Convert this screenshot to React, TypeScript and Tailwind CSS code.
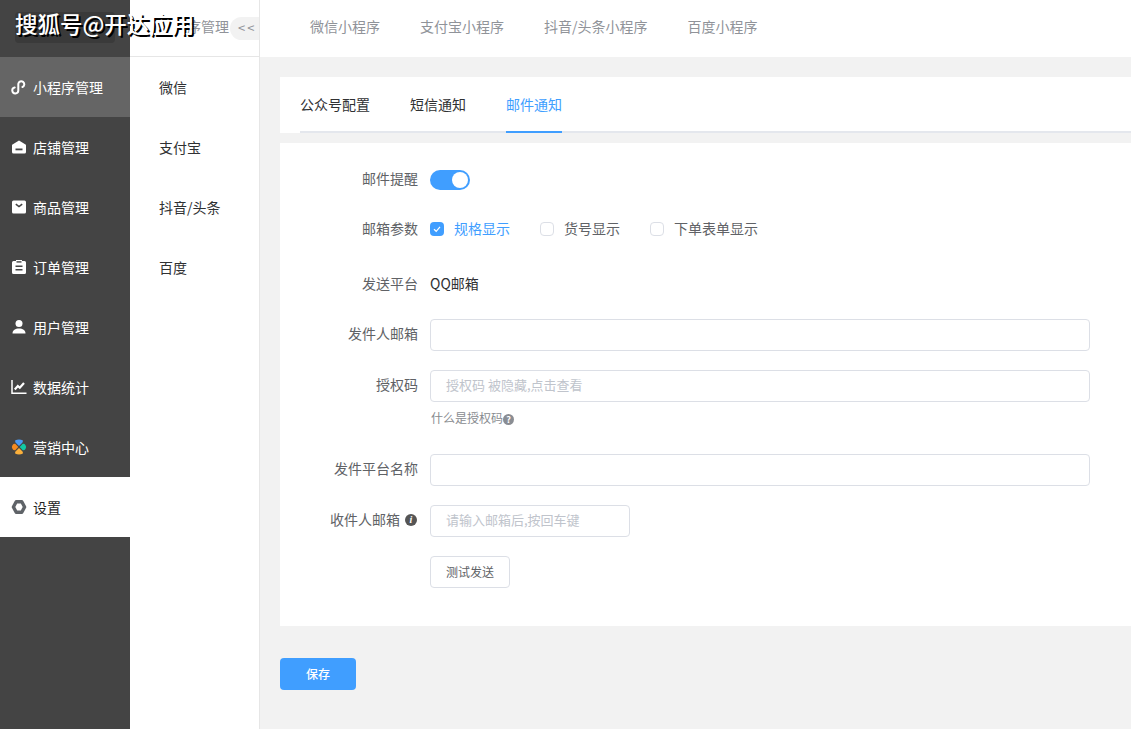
import React from "react";

const font = { fontFamily: '"Noto Sans CJK SC", "Liberation Sans", sans-serif' };

const Mini = () => (
  <svg width="16" height="16" viewBox="0 0 16 16" fill="none" stroke="white" strokeWidth="2" strokeLinecap="round">
    <path d="M3.200 8.500a3 3 0 1 0 3.600 3V4.800A3 3 0 1 1 11 8" transform="translate(0.500 0)" />
  </svg>
);
const Shop = () => (
  <svg width="16" height="16" viewBox="0 0 16 16" fill="white">
    <path d="M8 1.500 14.500 5.500a1 1 0 0 1 .5.900V13a1.500 1.500 0 0 1-1.500 1.500h-11A1.500 1.500 0 0 1 1 13V6.400a1 1 0 0 1 .5-.9Z" />
    <rect x="4.500" y="9.500" width="7" height="1.800" fill="#444" />
  </svg>
);
const Bag = () => (
  <svg width="16" height="16" viewBox="0 0 16 16" fill="white">
    <path d="M2.500 1.500h11A1.500 1.500 0 0 1 15 3v10a1.500 1.500 0 0 1-1.500 1.500h-11A1.500 1.500 0 0 1 1 13V3a1.500 1.500 0 0 1 1.500-1.500Z" />
    <path d="M4.800 5.200 8 7.600l3.200-2.400" fill="none" stroke="#444" strokeWidth="1.600" />
  </svg>
);
const Clip = () => (
  <svg width="16" height="16" viewBox="0 0 16 16" fill="white">
    <path d="M2.500 2H5V1h6v1h2.500A1.500 1.500 0 0 1 15 3.500v10a1.500 1.500 0 0 1-1.500 1.500h-11A1.500 1.500 0 0 1 1 13.500v-10A1.500 1.500 0 0 1 2.500 2Z" />
    <rect x="5.500" y="2.200" width="5" height="1.400" fill="#444" />
    <rect x="4.500" y="6.500" width="7" height="1.500" fill="#444" />
    <rect x="4.500" y="10" width="7" height="1.500" fill="#444" />
  </svg>
);
const User = () => (
  <svg width="16" height="16" viewBox="0 0 16 16" fill="white">
    <circle cx="8" cy="4.500" r="3.500" />
    <path d="M1.500 14.500c0-3.500 2.800-5 6.500-5s6.500 1.500 6.500 5Z" />
  </svg>
);
const Chart = () => (
  <svg width="16" height="16" viewBox="0 0 16 16" fill="none" stroke="white">
    <path d="M1 1V14.200h14.500" strokeWidth="1.500" />
    <path d="M3.800 10.500 6.800 7l2 1.800L13 4" strokeWidth="2.200" />
  </svg>
);
const Marketing = () => (
  <svg width="18" height="18" viewBox="0 0 18 18">
    <path d="M5 1.500c2-1.200 6-1.200 8 0 .8.700.3 1.800-.3 2.600L9 8 5.300 4.100C4.700 3.300 4.200 2.200 5 1.500Z" fill="#4a9bf5" />
    <path d="M13.200 5.400c2-.9 3.800 1.800 3.800 3.600s-1.800 4.500-3.800 3.600L9.800 9Z" fill="#12c9a5" />
    <path d="M4.800 5.400C2.800 4.500 1 7.200 1 9s1.800 4.500 3.800 3.600L8.200 9Z" fill="#f58a1f" />
    <path d="M9 10l3.700 3.900c.6.800 1.100 1.900.3 2.600-2 1.200-6 1.200-8 0-.8-.7-.3-1.800.3-2.600Z" fill="#fbb03b" />
  </svg>
);
const Gear = () => (
  <svg width="16" height="16" viewBox="0 0 16 16" fill="none">
    <path d="M5.200 2.800h5.600L13.600 8l-2.800 5.200H5.200L2.400 8Z" stroke="#5f6368" strokeWidth="3.400" strokeLinejoin="round" />
  </svg>
);

const menu = [
  { label: "小程序管理", icon: <Mini />, cls: "bg-[#656565] text-white" },
  { label: "店铺管理", icon: <Shop />, cls: "text-white" },
  { label: "商品管理", icon: <Bag />, cls: "text-white" },
  { label: "订单管理", icon: <Clip />, cls: "text-white" },
  { label: "用户管理", icon: <User />, cls: "text-white" },
  { label: "数据统计", icon: <Chart />, cls: "text-white" },
  { label: "营销中心", icon: <Marketing />, cls: "text-white" },
  { label: "设置", icon: <Gear />, cls: "bg-white text-[#1f1f1f]" },
];

const Row = ({ label, h, children, mt, lift }: { label: React.ReactNode; h: string; children: React.ReactNode; mt: string; lift: string }) => (
  <div className={`flex items-center ${h} ${mt}`}>
    <div className={`w-[138px] shrink-0 text-right text-[14px] text-[#606266] ${lift}`}>{label}</div>
    <div className="ml-3 flex min-w-0 flex-1 items-center">{children}</div>
  </div>
);

const Field = ({ placeholder }: { placeholder?: string }) => (
  <div className="flex h-8 w-[660px] items-center rounded border border-[#dcdfe6] bg-white px-[15px] pb-[2px] text-[13px] text-[#c0c4cc]">{placeholder}</div>
);

const Check = ({ label, on }: { label: string; on?: boolean }) => (
  <div className="flex items-center">
    {on ? (
      <div className="flex h-3.5 w-3.5 items-center justify-center rounded-sm bg-[#409eff]">
        <svg width="10" height="10" viewBox="0 0 10 10" fill="none" stroke="white" strokeWidth="1.200"><path d="M2 5.200 4.200 7.300 8 2.800" /></svg>
      </div>
    ) : (
      <div className="h-3.5 w-3.5 rounded-sm border border-[#dcdfe6] bg-white" />
    )}
    <span className={`ml-2.5 pb-[2px] text-[14px] ${on ? "text-[#409eff]" : "text-[#606266]"}`}>{label}</span>
  </div>
);

export default function App() {
  return (
    <div className="relative flex h-[729px] w-[1131px] overflow-hidden bg-[#f2f2f2]" style={font}>
      <aside className="flex w-[130px] shrink-0 flex-col bg-[#444444]">
        <div className="h-[57px] pl-[15px] pt-3">
          <div className="h-[31px] w-[100px] rounded bg-[#3a3a3a]" />
        </div>
        {menu.map((m) => (
          <div key={m.label} className={`flex h-[60px] items-center pl-[11px] text-[14px] ${m.cls}`}>
            <span className="flex w-4 justify-center">{m.icon}</span>
            <span className="ml-1.5">{m.label}</span>
          </div>
        ))}
      </aside>

      <nav className="flex w-[130px] shrink-0 flex-col border-r border-[#e6e6e6] bg-white">
        <div className="flex h-[57px] items-center justify-end border-b border-[#e6e6e6]">
          <span className="pb-1 text-[14px] text-[#909399]">序管理</span>
          <span className="ml-[1px] flex h-[23px] w-[29px] items-center rounded-l-xl bg-[#f2f2f2] pl-2 text-[13px] tracking-[2px] text-[#909399]">&lt;&lt;</span>
        </div>
        {["微信", "支付宝", "抖音/头条", "百度"].map((t) => (
          <div key={t} className="flex h-[60px] items-center pl-[29px] text-[14px] text-[#303133]">{t}</div>
        ))}
      </nav>

      <main className="min-w-0 flex-1">
        <div className="flex h-[57px] items-center gap-10 bg-white pb-1 pl-[50px] text-[14px] text-[#909399]">
          <span>微信小程序</span>
          <span>支付宝小程序</span>
          <span>抖音/头条小程序</span>
          <span>百度小程序</span>
        </div>

        <div className="ml-5 mt-5">
          <div className="h-[66px] bg-white pl-5">
            <div className="flex h-[56px] gap-10 border-b-2 border-[#e4e7ed] text-[14px] text-[#303133]">
              <span className="flex h-[56px] items-center pb-0.5">公众号配置</span>
              <span className="flex h-[56px] items-center pb-0.5">短信通知</span>
              <span className="flex h-[56px] items-center border-b-2 border-[#409eff] text-[#409eff]">邮件通知</span>
            </div>
          </div>
          <div className="-mt-[10px] h-2.5 bg-[#f2f2f2]" />
          <form className="h-[483px] bg-white pt-[21px]">
            <Row label="邮件提醒" h="h-8" mt="mt-0" lift="pb-1">
              <div className="flex h-5 w-10 items-center justify-end rounded-full bg-[#409eff] pr-[2px]">
                <div className="h-4 w-4 rounded-full bg-white" />
              </div>
            </Row>
            <Row label="邮箱参数" h="h-8" mt="mt-[17px]" lift="pb-[2px]">
              <div className="flex items-center gap-[30px]">
                <Check label="规格显示" on />
                <Check label="货号显示" />
                <Check label="下单表单显示" />
              </div>
            </Row>
            <Row label="发送平台" h="h-8" mt="mt-[23px]" lift="pb-[2px]">
              <span className="pb-[2px] text-[14px] text-[#303133]">QQ邮箱</span>
            </Row>
            <Row label="发件人邮箱" h="h-8" mt="mt-[19px]" lift="pb-1"><Field /></Row>
            <Row label="授权码" h="h-8" mt="mt-[19px]" lift="pb-1"><Field placeholder="授权码 被隐藏,点击查看" /></Row>
            <div className="ml-[151px] mt-[9px] flex h-4 items-center text-[12px] text-[#888b90]">
              <span className="pb-[2px]">什么是授权码</span>
              <span className="flex h-[11px] w-[11px] items-center justify-center rounded-full bg-[#8a8d93] text-[9px] font-bold leading-none text-white">?</span>
            </div>
            <Row label="发件平台名称" h="h-8" mt="mt-[27px]" lift="pb-1"><Field /></Row>
            <Row
              lift="pb-[3px]"
              label={
                <span className="mr-[1px] inline-flex items-center">
                  <span className="pb-[1px]">收件人邮箱</span>
                  <span className="ml-[5px] flex h-3 w-3 items-center justify-center rounded-full bg-[#555] text-[10px] font-bold italic leading-none text-white" style={{ fontFamily: '"Liberation Serif", serif' }}>i</span>
                </span>
              }
              h="h-8"
              mt="mt-[19px]"
            >
              <div className="flex h-8 w-[200px] items-center rounded border border-[#dcdfe6] bg-white px-[15px] pb-[2px] text-[13px] text-[#c0c4cc]">请输入邮箱后,按回车键</div>
            </Row>
            <div className="ml-[150px] mt-[19px]">
              <button type="button" className="h-8 w-20 rounded-sm border border-[#dcdfe6] bg-white text-[12px] text-[#606266]">测试发送</button>
            </div>
          </form>
          <button type="button" className="mt-8 h-8 w-[76px] rounded-sm bg-[#409eff] text-[12px] font-medium text-white">保存</button>
        </div>
      </main>

      <div className="absolute left-[15px] top-[7px] text-[22.5px] font-medium leading-[32px] text-white [text-shadow:2px_2px_0_#000]">搜狐号@开达应用</div>
    </div>
  );
}
